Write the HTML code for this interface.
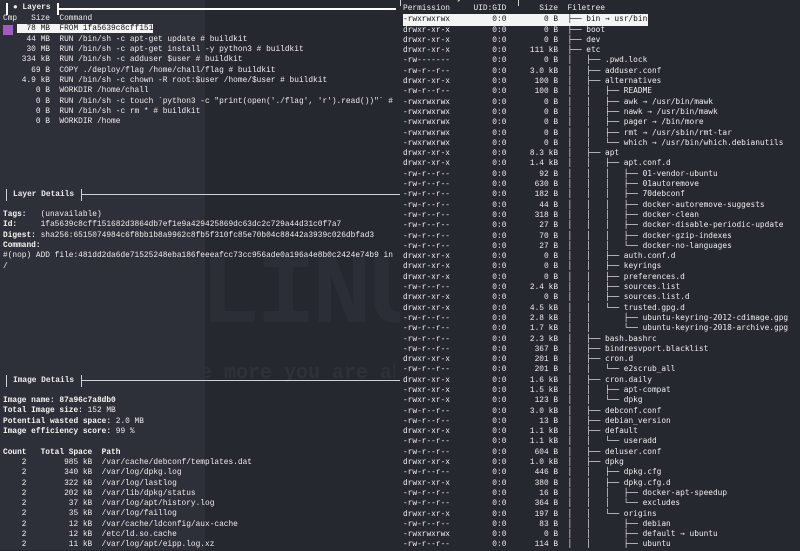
<!DOCTYPE html>
<html><head><meta charset="utf-8">
<style>
html,body{margin:0;padding:0}
body{width:800px;height:550px;overflow:hidden;position:relative;background:#262830;font-family:"Liberation Mono","DejaVu Sans Mono",monospace;font-size:7.83px;color:#ededee}
.lp{position:absolute;left:0;top:0;width:205px;height:550px;background:#2d3038}
pre{margin:0;font:inherit;line-height:10.31px;white-space:pre;position:absolute}
b{font-weight:bold;color:#f6f6f6}
.hl{background:#f4f4f4;color:#111}
.hdr{position:absolute;font-weight:bold;line-height:10px;white-space:pre}
.line{position:absolute;height:1px;background:#cfd0d4}
.r{height:10.31px;white-space:pre}
.r span{display:inline-block}
.a{width:70.5px}
.b{width:32.9px;text-align:right}
.c{width:51.7px;text-align:right}
.t{margin-left:9.4px;font-family:"DejaVu Sans Mono","Liberation Mono",monospace;font-size:7.8px}
.wm{position:absolute;font-family:"Liberation Mono",monospace;font-weight:bold;white-space:pre;overflow:hidden}
</style></head><body>
<div class="lp"></div>
<div class="wm" style="left:200px;top:240px;width:200px;font-size:100px;letter-spacing:-4px;color:#2b2e36">LINUX</div>
<div class="wm" style="left:200px;top:362px;width:195px;font-size:20px;color:#2e3139">e more you are able</div>

<!-- Layers header -->
<div class="line" style="left:6px;top:3px;width:2px;height:12px;background:#fff"></div>
<div class="hdr" style="left:13px;top:3px">● Layers</div>
<div class="line" style="left:57px;top:3px;width:2px;height:12px;background:#fff"></div>
<div class="line" style="left:58px;top:8px;width:338px;height:2px;background:#fff"></div>
<div style="position:absolute;left:3px;top:25px;width:10px;height:10px;background:#a05cc0"></div>
<pre style="left:3px;top:14px">Cmp   Size  Command
   <span class="hl">  78 MB  FROM 1fa5639c8cff151</span>
     44 MB  RUN /bin/sh -c apt-get update # buildkit
     30 MB  RUN /bin/sh -c apt-get install -y python3 # buildkit
    334 kB  RUN /bin/sh -c adduser $user # buildkit
      69 B  COPY ./deploy/flag /home/chall/flag # buildkit
    4.9 kB  RUN /bin/sh -c chown -R root:$user /home/$user # buildkit
       0 B  WORKDIR /home/chall
       0 B  RUN /bin/sh -c touch `python3 -c "print(open('./flag', 'r').read())"` #
       0 B  RUN /bin/sh -c rm * # buildkit
       0 B  WORKDIR /home</pre>

<!-- Layer details -->
<div class="line" style="left:6px;top:189px;width:1px;height:12px"></div>
<div class="hdr" style="left:13px;top:190px">Layer Details</div>
<div class="line" style="left:81px;top:189px;width:1px;height:12px"></div>
<div class="line" style="left:82px;top:194px;width:318px"></div>
<pre style="left:3px;top:210px"><b>Tags:</b>   (unavailable)
<b>Id:</b>     1fa5639c8cff151682d3864db7ef1e9a429425869dc63dc2c729a44d31c0f7a7
<b>Digest:</b> sha256:6515074984c6f8bb1b8a9962c8fb5f310fc85e70b04c88442a3939c026dbfad3
<b>Command:</b>
#(nop) ADD file:481dd2da6de71525248eba186feeeafcc73cc956ade0a196a4e8b0c2424e74b9 in
/</pre>

<!-- Image details -->
<div class="line" style="left:6px;top:375px;width:1px;height:12px"></div>
<div class="hdr" style="left:13px;top:376px">Image Details</div>
<div class="line" style="left:81px;top:375px;width:1px;height:12px"></div>
<div class="line" style="left:82px;top:380px;width:318px"></div>
<pre style="left:3px;top:396px"><b>Image name: 87a96c7a8db0</b>
<b>Total Image size:</b> 152 MB
<b>Potential wasted space:</b> 2.0 MB
<b>Image efficiency score:</b> 99 %

<b>Count   Total Space  Path</b>
    2        985 kB  /var/cache/debconf/templates.dat
    2        340 kB  /var/log/dpkg.log
    2        322 kB  /var/log/lastlog
    2        202 kB  /var/lib/dpkg/status
    2         37 kB  /var/log/apt/history.log
    2         35 kB  /var/log/faillog
    2         12 kB  /var/cache/ldconfig/aux-cache
    2         12 kB  /etc/ld.so.cache
    2         11 kB  /var/log/apt/eipp.log.xz</pre>

<!-- Right panel -->
<div class="line" style="left:400px;top:0;width:1px;height:6px"></div>
<div class="hdr" style="left:410px;top:-6px">Current Layer Contents</div>
<div class="line" style="left:518px;top:0;width:1px;height:6px"></div>
<div style="position:absolute;left:403px;top:4px;line-height:10.31px">
<div class="r"><span class="a">Permission</span><span class="b">UID:GID</span><span class="c">Size</span><span class="t" style="font-family:'Liberation Mono',monospace;font-size:7.83px">Filetree</span></div>
<div class="r"><span class="hl" style="display:inline-block;width:245px"><span class="a">-rwxrwxrwx</span><span class="b">0:0</span><span class="c">0 B</span><span class="t">├── bin → usr/bin</span></span></div>
<div class="r"><span class="a">drwxr-xr-x</span><span class="b">0:0</span><span class="c">0 B</span><span class="t">├── boot</span></div>
<div class="r"><span class="a">drwxr-xr-x</span><span class="b">0:0</span><span class="c">0 B</span><span class="t">├── dev</span></div>
<div class="r"><span class="a">drwxr-xr-x</span><span class="b">0:0</span><span class="c">111 kB</span><span class="t">├── etc</span></div>
<div class="r"><span class="a">-rw-------</span><span class="b">0:0</span><span class="c">0 B</span><span class="t">│   ├── .pwd.lock</span></div>
<div class="r"><span class="a">-rw-r--r--</span><span class="b">0:0</span><span class="c">3.0 kB</span><span class="t">│   ├── adduser.conf</span></div>
<div class="r"><span class="a">drwxr-xr-x</span><span class="b">0:0</span><span class="c">100 B</span><span class="t">│   ├── alternatives</span></div>
<div class="r"><span class="a">-rw-r--r--</span><span class="b">0:0</span><span class="c">100 B</span><span class="t">│   │   ├── README</span></div>
<div class="r"><span class="a">-rwxrwxrwx</span><span class="b">0:0</span><span class="c">0 B</span><span class="t">│   │   ├── awk → /usr/bin/mawk</span></div>
<div class="r"><span class="a">-rwxrwxrwx</span><span class="b">0:0</span><span class="c">0 B</span><span class="t">│   │   ├── nawk → /usr/bin/mawk</span></div>
<div class="r"><span class="a">-rwxrwxrwx</span><span class="b">0:0</span><span class="c">0 B</span><span class="t">│   │   ├── pager → /bin/more</span></div>
<div class="r"><span class="a">-rwxrwxrwx</span><span class="b">0:0</span><span class="c">0 B</span><span class="t">│   │   ├── rmt → /usr/sbin/rmt-tar</span></div>
<div class="r"><span class="a">-rwxrwxrwx</span><span class="b">0:0</span><span class="c">0 B</span><span class="t">│   │   └── which → /usr/bin/which.debianutils</span></div>
<div class="r"><span class="a">drwxr-xr-x</span><span class="b">0:0</span><span class="c">8.3 kB</span><span class="t">│   ├── apt</span></div>
<div class="r"><span class="a">drwxr-xr-x</span><span class="b">0:0</span><span class="c">1.4 kB</span><span class="t">│   │   ├── apt.conf.d</span></div>
<div class="r"><span class="a">-rw-r--r--</span><span class="b">0:0</span><span class="c">92 B</span><span class="t">│   │   │   ├── 01-vendor-ubuntu</span></div>
<div class="r"><span class="a">-rw-r--r--</span><span class="b">0:0</span><span class="c">630 B</span><span class="t">│   │   │   ├── 01autoremove</span></div>
<div class="r"><span class="a">-rw-r--r--</span><span class="b">0:0</span><span class="c">182 B</span><span class="t">│   │   │   ├── 70debconf</span></div>
<div class="r"><span class="a">-rw-r--r--</span><span class="b">0:0</span><span class="c">44 B</span><span class="t">│   │   │   ├── docker-autoremove-suggests</span></div>
<div class="r"><span class="a">-rw-r--r--</span><span class="b">0:0</span><span class="c">318 B</span><span class="t">│   │   │   ├── docker-clean</span></div>
<div class="r"><span class="a">-rw-r--r--</span><span class="b">0:0</span><span class="c">27 B</span><span class="t">│   │   │   ├── docker-disable-periodic-update</span></div>
<div class="r"><span class="a">-rw-r--r--</span><span class="b">0:0</span><span class="c">70 B</span><span class="t">│   │   │   ├── docker-gzip-indexes</span></div>
<div class="r"><span class="a">-rw-r--r--</span><span class="b">0:0</span><span class="c">27 B</span><span class="t">│   │   │   └── docker-no-languages</span></div>
<div class="r"><span class="a">drwxr-xr-x</span><span class="b">0:0</span><span class="c">0 B</span><span class="t">│   │   ├── auth.conf.d</span></div>
<div class="r"><span class="a">drwxr-xr-x</span><span class="b">0:0</span><span class="c">0 B</span><span class="t">│   │   ├── keyrings</span></div>
<div class="r"><span class="a">drwxr-xr-x</span><span class="b">0:0</span><span class="c">0 B</span><span class="t">│   │   ├── preferences.d</span></div>
<div class="r"><span class="a">-rw-r--r--</span><span class="b">0:0</span><span class="c">2.4 kB</span><span class="t">│   │   ├── sources.list</span></div>
<div class="r"><span class="a">drwxr-xr-x</span><span class="b">0:0</span><span class="c">0 B</span><span class="t">│   │   ├── sources.list.d</span></div>
<div class="r"><span class="a">drwxr-xr-x</span><span class="b">0:0</span><span class="c">4.5 kB</span><span class="t">│   │   └── trusted.gpg.d</span></div>
<div class="r"><span class="a">-rw-r--r--</span><span class="b">0:0</span><span class="c">2.8 kB</span><span class="t">│   │       ├── ubuntu-keyring-2012-cdimage.gpg</span></div>
<div class="r"><span class="a">-rw-r--r--</span><span class="b">0:0</span><span class="c">1.7 kB</span><span class="t">│   │       └── ubuntu-keyring-2018-archive.gpg</span></div>
<div class="r"><span class="a">-rw-r--r--</span><span class="b">0:0</span><span class="c">2.3 kB</span><span class="t">│   ├── bash.bashrc</span></div>
<div class="r"><span class="a">-rw-r--r--</span><span class="b">0:0</span><span class="c">367 B</span><span class="t">│   ├── bindresvport.blacklist</span></div>
<div class="r"><span class="a">drwxr-xr-x</span><span class="b">0:0</span><span class="c">201 B</span><span class="t">│   ├── cron.d</span></div>
<div class="r"><span class="a">-rw-r--r--</span><span class="b">0:0</span><span class="c">201 B</span><span class="t">│   │   └── e2scrub_all</span></div>
<div class="r"><span class="a">drwxr-xr-x</span><span class="b">0:0</span><span class="c">1.6 kB</span><span class="t">│   ├── cron.daily</span></div>
<div class="r"><span class="a">-rwxr-xr-x</span><span class="b">0:0</span><span class="c">1.5 kB</span><span class="t">│   │   ├── apt-compat</span></div>
<div class="r"><span class="a">-rwxr-xr-x</span><span class="b">0:0</span><span class="c">123 B</span><span class="t">│   │   └── dpkg</span></div>
<div class="r"><span class="a">-rw-r--r--</span><span class="b">0:0</span><span class="c">3.0 kB</span><span class="t">│   ├── debconf.conf</span></div>
<div class="r"><span class="a">-rw-r--r--</span><span class="b">0:0</span><span class="c">13 B</span><span class="t">│   ├── debian_version</span></div>
<div class="r"><span class="a">drwxr-xr-x</span><span class="b">0:0</span><span class="c">1.1 kB</span><span class="t">│   ├── default</span></div>
<div class="r"><span class="a">-rw-r--r--</span><span class="b">0:0</span><span class="c">1.1 kB</span><span class="t">│   │   └── useradd</span></div>
<div class="r"><span class="a">-rw-r--r--</span><span class="b">0:0</span><span class="c">604 B</span><span class="t">│   ├── deluser.conf</span></div>
<div class="r"><span class="a">drwxr-xr-x</span><span class="b">0:0</span><span class="c">1.0 kB</span><span class="t">│   ├── dpkg</span></div>
<div class="r"><span class="a">-rw-r--r--</span><span class="b">0:0</span><span class="c">446 B</span><span class="t">│   │   ├── dpkg.cfg</span></div>
<div class="r"><span class="a">drwxr-xr-x</span><span class="b">0:0</span><span class="c">380 B</span><span class="t">│   │   ├── dpkg.cfg.d</span></div>
<div class="r"><span class="a">-rw-r--r--</span><span class="b">0:0</span><span class="c">16 B</span><span class="t">│   │   │   ├── docker-apt-speedup</span></div>
<div class="r"><span class="a">-rw-r--r--</span><span class="b">0:0</span><span class="c">364 B</span><span class="t">│   │   │   └── excludes</span></div>
<div class="r"><span class="a">drwxr-xr-x</span><span class="b">0:0</span><span class="c">197 B</span><span class="t">│   │   └── origins</span></div>
<div class="r"><span class="a">-rw-r--r--</span><span class="b">0:0</span><span class="c">83 B</span><span class="t">│   │       ├── debian</span></div>
<div class="r"><span class="a">-rwxrwxrwx</span><span class="b">0:0</span><span class="c">0 B</span><span class="t">│   │       ├── default → ubuntu</span></div>
<div class="r"><span class="a">-rw-r--r--</span><span class="b">0:0</span><span class="c">114 B</span><span class="t">│   │       ├── ubuntu</span></div>
</div>
</body></html>
